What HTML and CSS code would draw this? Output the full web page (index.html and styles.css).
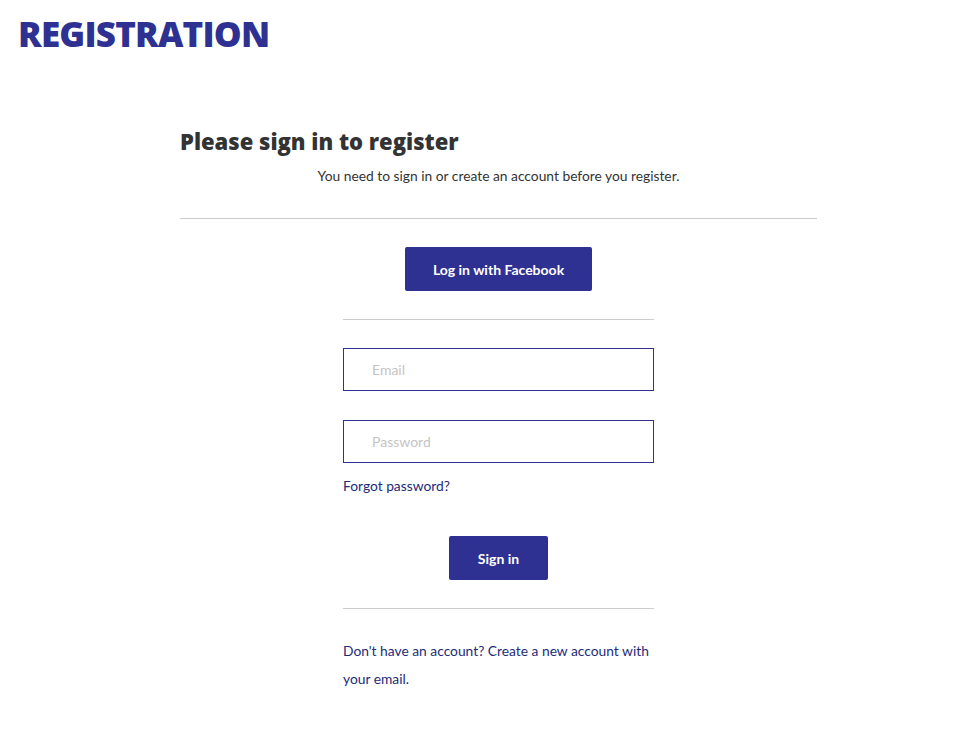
FILE: index.html
```html
<!DOCTYPE html>
<html lang="en">
<head>
<meta charset="utf-8">
<title>Registration</title>
<link rel="stylesheet" href="styles.css">
</head>
<body>
<header class="site-header">
  <h1 class="page-title">REGISTRATION</h1>
</header>
<main class="panel">
  <h2 class="panel-title">Please sign in to register</h2>
  <p class="panel-intro">You need to sign in or create an account before you register.</p>
  <hr class="rule rule-wide">
  <div class="auth">
    <div class="center"><button class="btn btn-fb" type="button">Log in with Facebook</button></div>
    <hr class="rule">
    <form class="form">
      <input class="field" type="email" placeholder="Email">
      <input class="field" type="password" placeholder="Password">
      <a class="link forgot" href="#">Forgot password?</a>
      <div class="center"><button class="btn btn-signin" type="button">Sign in</button></div>
    </form>
    <hr class="rule">
    <p class="create"><a class="link" href="#">Don't have an account? Create a new account with your email.</a></p>
  </div>
</main>
</body>
</html>
```
FILE: styles.css
```css
* { box-sizing: border-box; }
html, body { margin: 0; padding: 0; background: #fff; }
body { font-family: Lato, "Open Sans", sans-serif; color: #333; }

.site-header { padding: 14px 18px 0; }
.page-title {
  margin: 0;
  font-family: "Open Sans", sans-serif;
  font-weight: 800;
  font-size: 35px;
  line-height: 40px;
  color: #2e3192;
  letter-spacing: -0.8px;
}

.panel { width: 637px; margin: 72px 0 0 180px; padding: 0; }
.panel-title {
  margin: 0;
  font-family: "Open Sans", sans-serif;
  font-weight: 800;
  font-size: 22px;
  line-height: 30px;
  color: #333;
}
.panel-intro {
  margin: 10px 0 0;
  text-align: center;
  font-size: 13.8px;
  line-height: 20px;
  color: #333;
}
.rule { border: 0; border-top: 1px solid #ccc; margin: 0; height: 0; }
.rule-wide { margin-top: 32px; }

.auth { width: 311px; margin: 28px auto 0; }
.center { display: flex; justify-content: center; }
.btn {
  border: 0;
  border-radius: 2px;
  background: #2e3192;
  color: #fff;
  font-family: Lato, sans-serif;
  font-weight: 700;
  font-size: 14px;
  height: 44px;
  padding: 0;
  cursor: pointer;
}
.btn-fb { width: 187px; }
.btn-signin { width: 99px; }
.auth > .rule { margin-top: 28px; }

.form { display: flex; flex-direction: column; margin-top: 28px; }
.field {
  width: 311px;
  height: 43px;
  border: 1px solid #2e3192;
  border-radius: 0;
  padding: 0 0 0 28px;
  font-family: Lato, sans-serif;
  font-size: 14px;
  color: #333;
  margin-bottom: 29px;
}
.field::placeholder { color: #c4c4c4; }
.field + .field { margin-bottom: 14px; }
.link { color: #232b78; text-decoration: none; font-size: 13.8px; }
.forgot { line-height: 18px; margin-bottom: 41px; }

.create { margin: 28px 0 0; font-size: 13.8px; line-height: 28px; }
```
